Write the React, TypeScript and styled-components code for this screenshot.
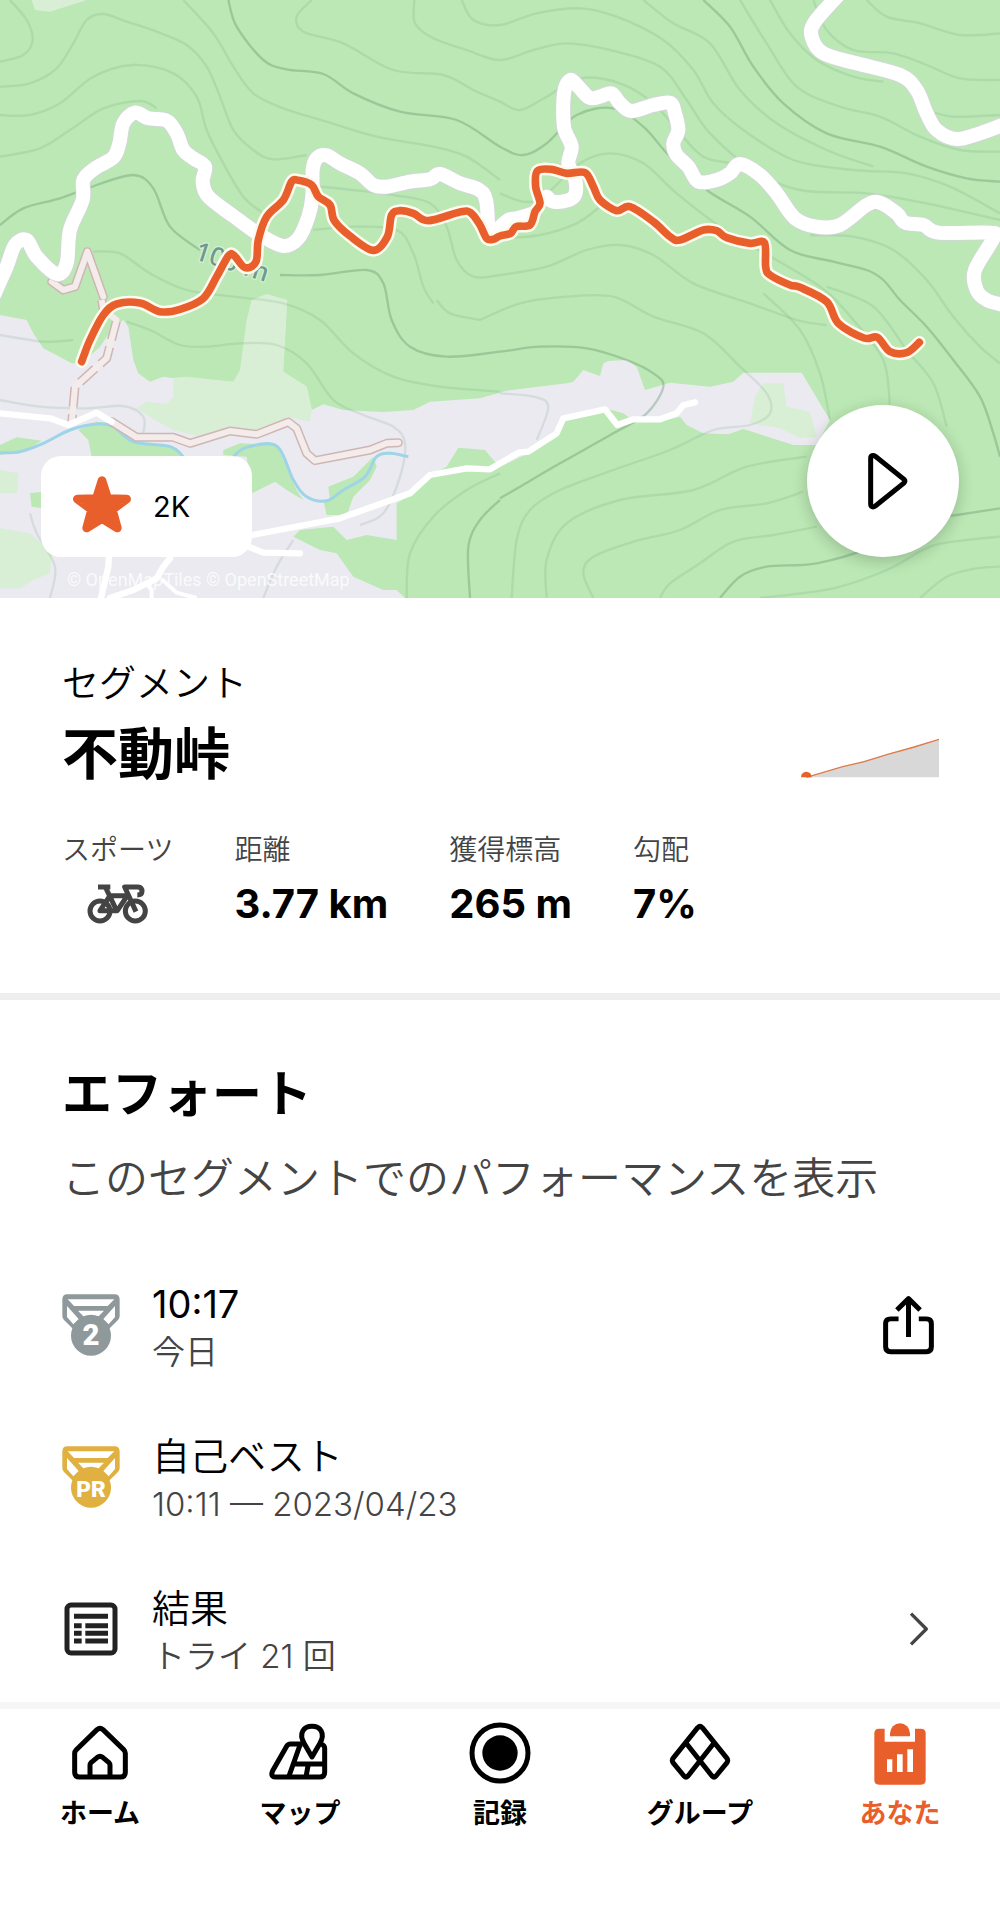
import React from "react";
import styled, { createGlobalStyle } from "styled-components";

const GlobalStyle = createGlobalStyle`
  * { box-sizing: border-box; }
  body {
    margin: 0;
    background: #fff;
    color: #000;
    font-family: Inter, "Noto Sans CJK JP", sans-serif;
  }
  h1, h2, p, dl, dt, dd, ul { margin: 0; padding: 0; }
  svg { display: block; flex: none; }
`;

const orange = "#e95f2b";

const Screen = styled.div`
  display: flex;
  flex-direction: column;
  min-height: 100vh;
`;

const MapPanel = styled.section`
  position: relative;
`;

const MapCanvas = styled.svg`
  width: 100%;
  height: auto;
`;

const FavoriteButton = styled.button`
  position: absolute;
  left: 41px;
  bottom: 41px;
  display: flex;
  align-items: center;
  gap: 21px;
  width: 211px;
  height: 101px;
  padding: 0 31px;
  border: 0;
  border-radius: 20px;
  background: #fff;
  color: #000;
  font: 400 29px/36px Inter, sans-serif;
`;

const PlayButton = styled.button`
  position: absolute;
  right: 41px;
  bottom: 41px;
  display: grid;
  place-items: center;
  width: 152px;
  height: 152px;
  padding: 0;
  border: 0;
  border-radius: 50%;
  background: #fff;
  box-shadow: 0 4px 16px rgba(0, 0, 0, 0.2);
`;

const Attribution = styled.p`
  position: absolute;
  left: 67px;
  bottom: 6px;
  color: rgba(255, 255, 255, 0.8);
  font: 400 18px/24px Roboto, sans-serif;
`;

const Summary = styled.section`
  padding: 60px 61px 59px 62px;
  border-bottom: 7px solid #eee;
`;

const TitleRow = styled.div`
  display: flex;
  align-items: flex-end;
  justify-content: space-between;
  padding-bottom: 8px;
`;

const Kicker = styled.p`
  font-size: 37px;
  font-weight: 350;
  line-height: 52px;
`;

const SegmentTitle = styled.h1`
  font-size: 56px;
  font-weight: 700;
  line-height: 88px;
`;

const ElevationBox = styled.div`
  padding-bottom: 20px;
`;

const Stats = styled.dl`
  display: flex;
  flex-wrap: wrap;
  gap: 24px 61px;
  padding-top: 20px;
`;

const Stat = styled.div`
  display: flex;
  flex-direction: column;
`;

const StatLabel = styled.dt`
  color: #444;
  font-size: 28px;
  font-weight: 350;
  line-height: 48px;
`;

const StatValue = styled.dd`
  display: flex;
  justify-content: ${(p: { $center?: boolean }) => (p.$center ? "center" : "flex-start")};
  align-items: center;
  min-height: 60px;
  font-size: 40px;
  font-weight: 700;
  line-height: 60px;
`;

const Efforts = styled.section`
  flex: 1;
  padding: 58px 63px 22px 62px;
`;

const SectionTitle = styled.h2`
  font-size: 50px;
  font-weight: 700;
  line-height: 72px;
`;

const SectionLead = styled.p`
  padding-top: 12px;
  color: #444;
  font-size: 43px;
  font-weight: 350;
  line-height: 72px;
`;

const EffortList = styled.ul`
  display: flex;
  flex-direction: column;
  gap: 50px;
  padding-top: 60px;
  list-style: none;
`;

const EffortRow = styled.li`
  display: flex;
  align-items: center;
  gap: 32px;
`;

const EffortText = styled.div`
  flex: 1;
  min-width: 0;
  padding-top: 6px;
`;

const EffortTitle = styled.p`
  font-size: 38px;
  font-weight: ${(p: { $latin?: boolean }) => (p.$latin ? 400 : 350)};
  line-height: 48px;
`;

const EffortMeta = styled.p`
  color: #444;
  font-size: 33px;
  font-weight: 350;
  line-height: 48px;
`;

const IconButton = styled.button`
  padding: 0;
  border: 0;
  background: none;
  color: #000;
`;

const TabBar = styled.nav`
  display: grid;
  grid-template-columns: repeat(5, 1fr);
  padding: 12px 0 88px;
  border-top: 7px solid #f6f6f6;
`;

const Tab = styled.a`
  display: flex;
  flex-direction: column;
  align-items: center;
  gap: 11px;
  color: ${(p: { $active?: boolean }) => (p.$active ? orange : "#000")};
  font-size: 27px;
  font-weight: 700;
  line-height: 36px;
  text-decoration: none;
`;

type Pt = [number, number];

const toPoints = (s: string): Pt[] => s.trim().split(/\s+/).map((p) => p.split(",").map(Number) as Pt);

// Catmull-Rom spline through the points, written as cubic segments.
const smooth = (s: string): string => {
  const p = toPoints(s);
  let d = `M${p[0][0]} ${p[0][1]}`;
  for (let i = 0; i < p.length - 1; i++) {
    const a = p[Math.max(0, i - 1)];
    const b = p[i];
    const c = p[i + 1];
    const e = p[Math.min(p.length - 1, i + 2)];
    d += `C${b[0] + (c[0] - a[0]) / 6} ${b[1] + (c[1] - a[1]) / 6} ${c[0] - (e[0] - b[0]) / 6} ${c[1] - (e[1] - b[1]) / 6} ${c[0]} ${c[1]}`;
  }
  return d;
};

const builtUp =
  "0,945 80,960 100,1000 130,1045 215,1090 245,1090 300,1040 340,980 370,960 385,980 400,1080 415,1120 450,1145 490,1130 520,1135 700,1145 850,1115 920,1160 935,1230 970,1213 1030,1230 1150,1236 1240,1230 1290,1205 1440,1195 1520,1172 1700,1150 1720,1145 1750,1110 1800,1128 1810,1090 1825,1083 1880,1080 1910,1100 1935,1170 2010,1148 2130,1160 2200,1145 2230,1118 2405,1118 2490,1260 2450,1335 2380,1335 2230,1287 2185,1303 2110,1300 2060,1275 2040,1250 2000,1260 1900,1262 1870,1240 1835,1230 1815,1230 1700,1250 1670,1300 1585,1360 1500,1400 1480,1380 1455,1350 1375,1343 1340,1400 1290,1425 1240,1480 1190,1510 1190,1620 1100,1605 1040,1620 1000,1580 900,1590 880,1610 960,1650 1010,1660 1060,1730 1150,1770 1190,1770 1215,1794 0,1794";

const woods = [
  "235,1290 290,1265 330,1270 380,1320 520,1340 550,1370 275,1370 265,1320",
  "0,1335 50,1312 125,1322 80,1350 0,1365",
  "670,1350 720,1330 830,1335 860,1400 890,1470 910,1500 860,1470 825,1445 755,1480 740,1370 670,1365",
  "985,1460 1060,1430 1120,1370 1130,1400 1110,1440 1060,1490 1040,1545 980,1545 970,1500 990,1500",
  "90,1480 130,1475 130,1525 95,1520",
];

const meadows = [
  "520,1133 560,1130 700,1145 720,1110 740,960 755,900 800,882 862,900 850,1115 920,1160 935,1230 930,1265 860,1250 800,1300 690,1280 600,1310 520,1290 455,1255 410,1225 440,1205 500,1212 520,1190",
  "0,1410 55,1420 50,1480 0,1480",
  "0,1585 90,1600 155,1660 150,1720 100,1740 60,1765 0,1765",
  "2290,1150 2350,1150 2360,1220 2430,1235 2450,1310 2400,1315 2340,1285 2250,1270 2265,1190",
  "95,0 260,0 150,35 105,30",
];

const minorContours = [
  "30,0 80,60 98,120 70,165 0,185",
  "0,260 90,250 170,205 220,130 260,60 310,42 380,65 470,95 560,135 620,200 660,290 700,390 760,450 820,478 920,465",
  "0,345 90,345 180,310 280,230 400,195 520,220 590,290 620,390 670,490 730,590 790,640",
  "0,470 120,445 210,390 310,325 420,303 470,325",
  "550,0 640,100 700,200 760,280 850,325 980,365 1130,410 1300,440 1400,470 1500,540",
  "935,0 890,50 910,95 1030,130 1180,210 1330,225 1420,270 1500,305 1560,330 1640,290 1740,235 1860,250 1960,310 2040,400 2110,470 2200,490",
  "1243,0 1245,70 1300,115 1400,150 1500,180 1600,150 1700,130 1830,150 1980,200 2060,300 2130,400 2260,510 2400,570 2600,580 2780,610 3000,660",
  "1385,0 1420,60 1500,75 1610,40 1740,25 1850,50 1990,120 2080,210 2140,310 2230,390 2380,480 2560,510 2720,520 2850,560 3000,640",
  "1930,0 2020,70 2130,130 2220,270 2330,370 2480,450 2620,500",
  "2220,0 2300,130 2390,260 2520,320 2640,350 2760,410 2880,450 3000,455",
  "2310,0 2370,100 2450,180 2560,230 2650,245",
  "2600,0 2660,50 2760,70 2880,105 3000,100",
  "2440,0 2480,90 2560,150 2680,160 2780,195 2880,235 3000,240",
  "2780,330 2860,350 3000,345",
  "960,560 1060,570 1180,585 1290,610 1340,680 1370,780 1420,830 1500,825 1640,800 1760,750 1860,735 1960,765 2080,850 2250,910 2390,960 2480,975",
  "940,690 1060,680 1190,690 1240,760 1270,860 1300,910",
  "1440,960 1560,910 1700,890 1840,890 1960,950 2110,1000 2220,1100 2300,1180 2310,1240 2250,1275 2140,1290 2010,1350 1840,1410 1680,1470 1590,1530 1550,1620 1535,1794",
  "1500,580 1570,605 1630,590 1740,490 1830,460 1930,490 2030,580 2160,680 2260,740 2460,860 2560,960 2650,1080 2670,1220",
  "1500,715 1620,705 1730,670 1800,620",
  "2430,705 2560,710 2680,750 2780,840 2860,950 2940,1040 3000,1090",
  "2480,860 2620,920 2720,1050 2800,1150 2840,1280",
  "2290,880 2400,990 2460,1120 2490,1260",
  "2420,1370 2240,1400 2080,1470 1860,1500 1700,1570 1640,1680 1640,1794",
  "2410,1475 2300,1510 2160,1530 2040,1590 1900,1625 1780,1670 1750,1720 1780,1794",
  "2450,1580 2320,1605 2200,1625 2100,1690 2010,1750 1980,1794",
  "2280,1794 2500,1765 2660,1710 2790,1640 2900,1620 3000,1610",
  "2760,1794 2840,1730 2930,1705 3000,1700",
  "0,1005 130,1025 220,1020",
  "380,965 450,990 540,1035 620,1040 720,1030 830,1035 920,1090 1000,1200 1090,1245 1180,1280 1215,1330 1200,1430 1150,1540 1080,1575",
  "280,755 360,760 450,820 560,870 700,890 850,910 960,960 1060,1060 1180,1130 1320,1160 1500,1175",
  "0,1200 120,1220 260,1225 370,1218 430,1250 430,1300",
  "1500,1180 1600,1190 1645,1220 1610,1320",
  "1310,900 1350,940 1440,960",
  "1220,1794 1230,1660 1300,1550 1400,1470 1500,1420",
  "880,1620 830,1700 790,1794",
  "150,1794 165,1700 110,1600 90,1540",
];

const majorContours = [
  "0,675 70,625 180,595 290,555 400,525 460,565 510,680 600,750",
  "685,0 710,80 790,180 860,208 970,222 1060,280 1200,335 1370,360 1500,440 1570,465 1640,430 1730,345 1840,325 1930,380 2010,470 2120,570 2250,650 2370,750 2500,785 2600,810 2650,840 2700,900 2780,980 2860,1080 2940,1190 2980,1300 3000,1370",
  "2110,0 2190,80 2260,200 2350,310 2480,400 2640,440 2780,500 2900,535 3000,545",
  "840,825 960,825 1100,810 1150,850 1175,960 1230,1040 1340,1070 1500,1055 1620,1040 1760,1045 1880,1080 1960,1120 1990,1160 1940,1240 1840,1300 1680,1390 1560,1460 1500,1495",
  "2160,1794 2220,1730 2300,1700 2450,1690 2620,1640 2780,1560 2870,1545 3000,1525",
  "1410,1794 1405,1640 1440,1560 1500,1500",
];

const mainRoads = [
  "-20,890 20,800 45,735 80,720 110,770 170,822 200,790 210,690 248,600 250,540 285,505 340,472 358,430 370,370 405,338 445,355 500,362 530,400 550,450 580,475 615,500 608,545 625,590 700,648 780,705 850,738 895,715 925,650 937,590 938,510 950,475 980,466 1020,490 1080,520 1120,555 1160,560 1230,545 1290,538 1320,522 1380,550 1435,568 1458,600 1465,690",
  "1480,700 1525,660 1550,655 1600,640",
  "1640,590 1660,605 1700,602 1725,585 1726,540 1705,490 1715,440 1692,380 1692,280 1710,240 1735,260 1768,293 1800,290 1835,280 1860,310 1895,333 1960,315 2010,308 2025,340 2035,390 2020,430 2030,465 2065,500 2095,545 2150,540 2190,520 2220,492 2280,525 2330,580 2385,655 2450,680 2520,675 2600,615 2640,608 2690,640 2715,668 2770,675 2815,698 2970,698 2980,715 2925,810 2930,870 2960,900 3010,915",
  "2520,-20 2445,65 2435,110 2470,160 2570,190 2700,225 2750,270 2780,340 2810,390 2870,417 2940,400 3020,370",
];

const lanes = [
  "0,1240 150,1255 205,1275 290,1238 335,1265",
  "740,1608 1020,1555 1230,1480 1290,1425 1400,1405 1470,1408 1555,1358 1585,1355 1670,1300 1690,1255 1815,1228 1852,1275 1900,1258 1980,1258 2030,1240 2050,1215 2085,1207",
  "745,1640 790,1658 900,1660",
  "327,1660 325,1700 303,1794",
  "510,1675 490,1700 470,1735 400,1770 330,1794",
];

const footways = ["440,1750 455,1770 455,1794", "485,1738 530,1778 590,1794"];

const tracks = [
  "335,1265 410,1312 520,1312 570,1330 690,1293 770,1303 865,1266 890,1285 920,1360 945,1382 1110,1350 1160,1330 1195,1328",
  "155,845 190,870 225,860 262,755 310,890",
];

const river1 = "0,1358 60,1355 130,1330 210,1290 290,1272 340,1280 400,1325 510,1340 550,1370";
const river2 = "700,1370 740,1342 830,1338 880,1440 920,1490 980,1502 1030,1470 1095,1430 1130,1370 1170,1360 1225,1370";

const route =
  "245,1085 270,1020 310,945 350,912 420,909 480,935 540,928 610,895 650,830 685,768 702,766 735,803 768,785 775,720 800,650 850,600 875,545 895,541 935,555 955,590 990,615 1003,662 1050,708 1120,751 1162,710 1175,645 1200,632 1240,640 1285,662 1380,636 1412,638 1440,675 1460,715 1480,718 1500,708 1532,700 1548,680 1590,675 1605,635 1620,610 1607,560 1612,513 1655,508 1700,520 1755,518 1780,560 1800,600 1850,632 1890,620 1960,665 2010,710 2040,720 2110,690 2150,692 2180,713 2250,730 2293,728 2297,800 2310,825 2370,855 2400,862 2480,905 2515,970 2592,1014 2632,1012 2670,1055 2720,1058 2758,1027";

function MapDrawing() {
  return (
    <MapCanvas viewBox="0 0 3000 1794" fill="none" strokeLinejoin="round" role="img" aria-label="不動峠の地図">
      <rect width="3000" height="1794" fill="#bbe8b4" />
      <polygon points={builtUp} fill="#eaeaf0" />
      {woods.map((w) => <polygon key={w} points={w} fill="#bbe8b4" />)}
      {meadows.map((m) => <polygon key={m} points={m} fill="#d8efd6" />)}
      <g stroke="#5f8a6a" strokeOpacity="0.14" strokeWidth="7">
        {minorContours.map((c) => <path key={c} d={smooth(c)} />)}
      </g>
      <g stroke="#5b8a68" strokeOpacity="0.34" strokeWidth="7">
        {majorContours.map((c) => <path key={c} d={smooth(c)} />)}
      </g>
      <g stroke="#9fd4e8" strokeWidth="9">
        <path d={smooth(river1)} />
        <path d={smooth(river2)} />
      </g>
      <g strokeLinecap="round">
        {tracks.map((t) => <polyline key={t} points={t} stroke="#cfb6b5" strokeWidth="27" />)}
        {tracks.map((t) => <polyline key={t} points={t} stroke="#f3eceb" strokeWidth="18" />)}
      </g>
      <polyline points="305,900 310,930 350,960 320,1075 225,1160 215,1270" stroke="#cfb6b5" strokeWidth="27" strokeDasharray="60 22" />
      <polyline points="305,900 310,930 350,960 320,1075 225,1160 215,1270" stroke="#f3eceb" strokeWidth="18" />
      <g stroke="#fff" strokeWidth="19" strokeLinecap="round">
        {lanes.map((l) => <polyline key={l} points={l} />)}
      </g>
      <g stroke="#fff" strokeWidth="12">
        {footways.map((l) => <polyline key={l} points={l} />)}
      </g>
      <g strokeLinecap="round">
        {mainRoads.map((r) => <path key={r} d={smooth(r)} stroke="#d5d5dd" strokeWidth="47" />)}
        {mainRoads.map((r) => <path key={r} d={smooth(r)} stroke="#fff" strokeWidth="42" />)}
      </g>
      <text
        transform="translate(580 776) rotate(18)"
        fontFamily="Noto Sans, sans-serif"
        fontSize="78"
        fontWeight="500"
        fill="#6d9a8d"
        stroke="#d5efd2"
        strokeWidth="8"
        paintOrder="stroke"
      >
        100 m
      </text>
      <g strokeLinecap="round">
        <path d={smooth(route)} stroke="#fffaf0" strokeWidth="38" />
        <path d={smooth(route)} stroke={orange} strokeWidth="23" />
      </g>
    </MapCanvas>
  );
}

function Medal({ color, text, size }: { color: string; text: string; size: number }) {
  return (
    <svg width="58" height="62" viewBox="0 0 174 186" aria-hidden="true">
      <path
        fill={color}
        fillRule="evenodd"
        d="M16 1H157Q173 1 173 17V66Q173 73 168 78L140 106H34L6 78Q1 73 1 66V17Q1 1 16 1ZM17 16L36 36H137L157 16ZM15 36V69L34 91L50 75ZM159 36L124 75L140 91L159 69ZM48 50L64 67Q87 58 110 67L126 50Z"
      />
      <circle cx="87" cy="125" r="60" fill={color} />
      <text x="87" y="152" textAnchor="middle" fontFamily="Roboto, sans-serif" fontWeight="900" fontSize={size} fill="#fff">
        {text}
      </text>
    </svg>
  );
}

function StarIcon() {
  return (
    <svg width="60" height="60" viewBox="0 6 180 180" overflow="visible" aria-hidden="true">
      <path
        d="M90 17L107 71L164 72L121 104L136 159L90 131L44 159L59 104L16 72L73 71Z"
        fill={orange}
        stroke={orange}
        strokeWidth="26"
        strokeLinejoin="round"
      />
    </svg>
  );
}

function PlayIcon() {
  return (
    <svg width="72" height="72" viewBox="0 0 216 216" fill="none" stroke="#000" strokeWidth="15" aria-hidden="true">
      <path d="M71 40C71 31 78 29 85 34L171 103Q176 108 171 114L85 183C78 188 71 186 71 177Z" />
    </svg>
  );
}

function BikeIcon() {
  return (
    <svg width="64" height="42" viewBox="0 0 192 126" fill="none" stroke="#444" strokeWidth="15" strokeLinejoin="round" aria-label="サイクリング" role="img">
      <circle cx="42" cy="84" r="30" />
      <circle cx="148" cy="84" r="30" />
      <path d="M36 12H73" />
      <path d="M58 12L92 83M74 38H124L94 83H42L72 38" />
      <path d="M150 86L116 12H156Q168 13 168 25Q168 36 154 36" />
    </svg>
  );
}

function ElevationChart() {
  return (
    <svg width="138" height="40" viewBox="0 0 414 120" role="img" aria-label="標高グラフ">
      <path d="M16 118L414 4V118Z" fill="#d9d8d8" />
      <path d="M16 118L125 86L190 71L260 49L340 27L414 4" fill="none" stroke="#df7b48" strokeWidth="4" />
      <path d="M0 118A16 17 0 0 1 32 118Z" fill={orange} />
    </svg>
  );
}

function ShareIcon() {
  return (
    <svg width="57" height="63" viewBox="0 0 170 190" fill="none" stroke="currentColor" strokeWidth="15" strokeLinejoin="round" aria-hidden="true">
      <path d="M55 75H31Q16 75 16 90V159Q16 174 31 174H139Q154 174 154 159V90Q154 75 139 75H116" />
      <path d="M85 130V14M50 48L85 14L120 48" />
    </svg>
  );
}

function ChevronIcon() {
  return (
    <svg width="36" height="36" viewBox="0 0 108 108" fill="none" stroke="#444" strokeWidth="10" strokeLinejoin="round" aria-hidden="true">
      <path d="M30 8L76 54L30 100" />
    </svg>
  );
}

function ResultsIcon() {
  return (
    <svg width="58" height="58" viewBox="0 0 174 174" fill="none" stroke="#222" strokeWidth="15" aria-hidden="true">
      <rect x="15" y="15" width="144" height="144" rx="12" />
      <path d="M36 49H138M36 77H59M70 77H138M36 100H59M70 100H138M36 123H59M70 123H138" />
    </svg>
  );
}

const TabIcon = styled.svg.attrs({
  viewBox: "0 0 192 192",
  fill: "none",
  stroke: "currentColor",
  strokeWidth: 15,
  strokeLinejoin: "round",
  "aria-hidden": true,
})`
  width: 64px;
  height: 64px;
`;

const tabs = [
  {
    label: "ホーム",
    icon: (
      <TabIcon>
        <path d="M20 97Q20 91 25 86L87 26Q96 18 105 26L167 86Q172 91 172 97V154Q172 168 158 168H34Q20 168 20 154Z" />
        <path d="M66 168V133Q66 128 70 124L88 109Q96 103 104 109L122 124Q126 128 126 133V168" />
      </TabIcon>
    ),
  },
  {
    label: "マップ",
    icon: (
      <TabIcon>
        <path d="M104 69H67Q60 69 56 76L14 149Q6 168 23 168H156Q170 168 170 154V82Q170 73 160 69" />
        <path d="M96 72L62 168M80 129H170M121 129L114 168" />
        <path d="M132 108L109 68C90 36 108 16 132 16C156 16 174 36 155 68Z" fill="#fff" />
      </TabIcon>
    ),
  },
  {
    label: "記録",
    icon: (
      <TabIcon>
        <circle cx="96" cy="96" r="84" />
        <circle cx="96" cy="96" r="53" fill="currentColor" stroke="none" />
      </TabIcon>
    ),
  },
  {
    label: "グループ",
    icon: (
      <TabIcon>
        <path d="M54 66L132 165Q138 171 144 165L177 125Q181 119 177 112L103 20Q96 13 89 20L15 112Q11 119 15 125L48 165Q54 171 60 165L138 66" />
      </TabIcon>
    ),
  },
  {
    label: "あなた",
    active: true,
    icon: (
      <TabIcon>
        <g stroke="none" fill="currentColor">
          <path d="M33 23H50V62H141V23H159Q173 23 173 37V177Q173 191 159 191H33Q19 191 19 177V37Q19 23 33 23Z" />
          <path d="M66 46V37A30 30 0 0 1 126 37V46Z" />
          <path d="M57 115H73V153H57ZM87 100H104V153H87ZM118 85H135V153H118Z" fill="#fff" />
        </g>
      </TabIcon>
    ),
  },
];

const stats = [
  { label: "スポーツ", value: <BikeIcon />, center: true },
  { label: "距離", value: "3.77 km" },
  { label: "獲得標高", value: "265 m" },
  { label: "勾配", value: "7%" },
];

export default function App() {
  return (
    <Screen>
      <GlobalStyle />
      <MapPanel>
        <MapDrawing />
        <Attribution>© OpenMapTiles © OpenStreetMap</Attribution>
        <FavoriteButton type="button">
          <StarIcon />
          2K
        </FavoriteButton>
        <PlayButton type="button" aria-label="再生">
          <PlayIcon />
        </PlayButton>
      </MapPanel>

      <Summary>
        <TitleRow>
          <div>
            <Kicker>セグメント</Kicker>
            <SegmentTitle>不動峠</SegmentTitle>
          </div>
          <ElevationBox>
            <ElevationChart />
          </ElevationBox>
        </TitleRow>
        <Stats>
          {stats.map((s) => (
            <Stat key={s.label}>
              <StatLabel>{s.label}</StatLabel>
              <StatValue $center={s.center}>{s.value}</StatValue>
            </Stat>
          ))}
        </Stats>
      </Summary>

      <Efforts>
        <SectionTitle>エフォート</SectionTitle>
        <SectionLead>このセグメントでのパフォーマンスを表示</SectionLead>
        <EffortList>
          <EffortRow>
            <Medal color="#8f999c" text="2" size={88} />
            <EffortText>
              <EffortTitle $latin>10:17</EffortTitle>
              <EffortMeta>今日</EffortMeta>
            </EffortText>
            <IconButton type="button" aria-label="共有">
              <ShareIcon />
            </IconButton>
          </EffortRow>
          <EffortRow>
            <Medal color="#e0b040" text="PR" size={68} />
            <EffortText>
              <EffortTitle>自己ベスト</EffortTitle>
              <EffortMeta>10:11 — 2023/04/23</EffortMeta>
            </EffortText>
          </EffortRow>
          <EffortRow>
            <ResultsIcon />
            <EffortText>
              <EffortTitle>結果</EffortTitle>
              <EffortMeta>トライ 21 回</EffortMeta>
            </EffortText>
            <IconButton type="button" aria-label="結果を開く">
              <ChevronIcon />
            </IconButton>
          </EffortRow>
        </EffortList>
      </Efforts>

      <TabBar>
        {tabs.map((t) => (
          <Tab key={t.label} href="#" $active={t.active} aria-current={t.active ? "page" : undefined}>
            {t.icon}
            {t.label}
          </Tab>
        ))}
      </TabBar>
    </Screen>
  );
}
